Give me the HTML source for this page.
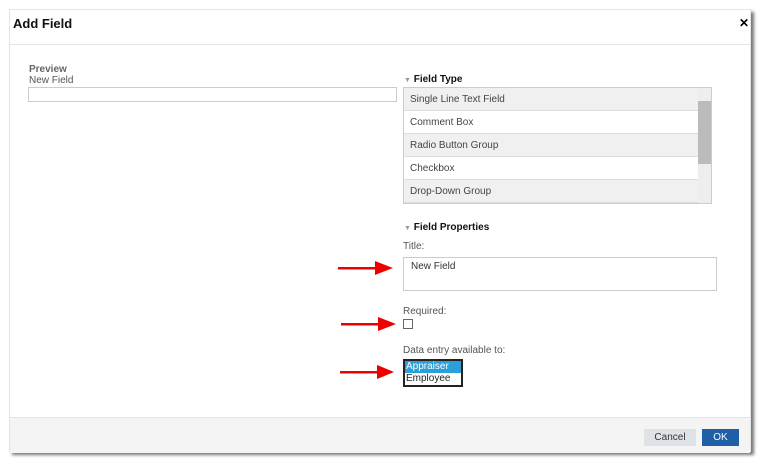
<!DOCTYPE html>
<html><head><style>
body{margin:0;width:762px;height:464px;background:#fff;position:relative;font-family:"Liberation Sans",sans-serif;overflow:hidden}
.a{position:absolute}
.dlg{left:9px;top:9px;width:742px;height:443px;background:#fff;box-shadow:3px 3px 3px #777;border:1px solid #e4e4e4;box-sizing:border-box}
.t{font-size:10px;color:#555}
.row{position:absolute;left:0;width:294px;height:23px;border-bottom:1px solid #ddd;font-size:10px;color:#444;line-height:23px;padding-left:6px;box-sizing:border-box}
</style></head><body>
<div class="a dlg"></div>
<div class="a" style="left:13px;top:16px;font-size:13px;font-weight:bold;color:#111">Add Field</div>
<div class="a" style="left:739px;top:16px;font-size:12px;font-weight:bold">✕</div>
<div class="a" style="left:10px;top:44px;width:740px;height:1px;background:#e6e6e6"></div>
<div class="a t" style="left:29px;top:64px;font-weight:bold;color:#666">Preview</div>
<div class="a t" style="left:29px;top:75px">New Field</div>
<div class="a" style="left:28px;top:87px;width:369px;height:15px;border:1px solid #ccc;box-sizing:border-box"></div>
<div class="a" style="left:404px;top:74px;font-size:10px;font-weight:bold;color:#111"><span style="color:#999;font-size:7px">▼</span> Field Type</div>
<div class="a" style="left:403px;top:87px;width:309px;height:117px;border:1px solid #ccc;box-sizing:border-box;overflow:hidden">
<div class="row" style="top:0;background:#f0f0f0">Single Line Text Field</div>
<div class="row" style="top:23px">Comment Box</div>
<div class="row" style="top:46px;background:#f0f0f0">Radio Button Group</div>
<div class="row" style="top:69px">Checkbox</div>
<div class="row" style="top:92px;background:#f0f0f0">Drop-Down Group</div>
<div class="a" style="left:294px;top:0;width:14px;height:117px;background:#eee"></div>
<div class="a" style="left:294px;top:13px;width:14px;height:63px;background:#bbb"></div>
</div>
<div class="a" style="left:404px;top:222px;font-size:10px;font-weight:bold;color:#111"><span style="color:#999;font-size:7px">▼</span> Field Properties</div>
<div class="a t" style="left:403px;top:241px">Title:</div>
<div class="a" style="left:403px;top:257px;width:314px;height:34px;border:1px solid #ccc;box-sizing:border-box;font-size:10px;color:#333;padding:3px 7px">New Field</div>
<div class="a t" style="left:403px;top:306px">Required:</div>
<div class="a" style="left:403px;top:319px;width:10px;height:10px;border:1px solid #666;box-sizing:border-box"></div>
<div class="a t" style="left:403px;top:345px">Data entry available to:</div>
<div class="a" style="left:403px;top:359px;width:60px;height:28px;border:2px solid #222;box-sizing:border-box;font-size:10px;line-height:12px">
<div style="background:#2a9fd8;color:#fff;padding-left:1px">Appraiser</div><div style="padding-left:1px;color:#222">Employee</div></div>
<div class="a" style="left:10px;top:417px;width:740px;height:35px;background:#f4f4f4;border-top:1px solid #e4e4e4"></div>
<div class="a" style="left:644px;top:429px;width:52px;height:17px;background:#dfe3e8;font-size:10px;color:#333;text-align:center;line-height:17px">Cancel</div>
<div class="a" style="left:702px;top:429px;width:37px;height:17px;background:#1f5fa6;font-size:10px;color:#fff;text-align:center;line-height:17px">OK</div>
<svg class="a" style="left:335px;top:258px" width="65" height="125">
<g fill="#e00" stroke="none">
<rect x="3" y="9" width="40" height="2.5"/><polygon points="40,3 58,10 40,17"/>
<rect x="6" y="65" width="40" height="2.5"/><polygon points="43,59 61,66 43,73"/>
<rect x="5" y="113" width="40" height="2.5"/><polygon points="42,107 59,114 42,121"/>
</g></svg>
</body></html>
